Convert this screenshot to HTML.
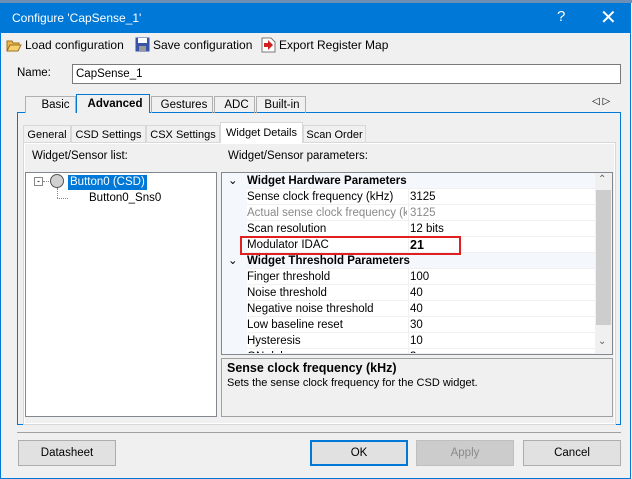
<!DOCTYPE html><html><head><style>
*{box-sizing:border-box;margin:0;padding:0}
body{width:632px;height:479px;background:#fff;font-family:"Liberation Sans",sans-serif;font-size:11.5px;color:#000;position:relative;overflow:hidden}
.a{position:absolute;white-space:nowrap}
.t{position:absolute;white-space:nowrap;text-align:center;overflow:hidden}
.btn{position:absolute;border:1px solid #adadad;background:#e1e1e1;text-align:center;line-height:24px;height:26px}
.row{position:absolute;left:222px;width:373px;height:16px;line-height:17px;white-space:nowrap}
.row .n{position:absolute;left:25px;width:160px;overflow:hidden}
.row .v{position:absolute;left:188px}
.row::after{content:"";position:absolute;left:25px;right:0;bottom:0;border-bottom:1px solid #f0f0f0}
.row .c{position:absolute;left:186px;top:0;bottom:0;border-left:1px solid #f0f0f0}
</style></head><body>
<div class="a" style="left:0;top:0;width:632px;height:3px;background:#6d8fb5"></div>
<div class="a" style="left:0;top:3px;width:631px;height:476px;background:#f0f0f0;border:1px solid #0078d7;border-top:none"></div>
<div class="a" style="left:0;top:3px;width:631px;height:30px;background:#0078d7;color:#fff;font-size:12px;line-height:30px;padding-left:12px">Configure 'CapSense_1'</div>
<div class="a" style="left:557px;top:8px;color:#fff;font-size:15px">?</div>
<div class="a" style="left:600px;top:5px;color:#fff;font-size:20px;font-weight:300">✕</div>
<svg class="a" style="left:6px;top:37px" width="16" height="16"><path d="M1 4h5l1 2h6v2H4L1 14z" fill="#e8b84a" stroke="#a07020"/><path d="M4 8h11l-3 6H1z" fill="#f5d070" stroke="#a07020"/></svg>
<div class="a" style="left:25px;top:38px;font-size:12px">Load configuration</div>
<svg class="a" style="left:135px;top:37px" width="15" height="15"><rect x="0.5" y="0.5" width="14" height="14" fill="#3a54a8"/><rect x="3" y="1" width="9" height="5" fill="#fff"/><rect x="4" y="9" width="7" height="5" fill="#999"/></svg>
<div class="a" style="left:153px;top:38px;font-size:12px">Save configuration</div>
<svg class="a" style="left:261px;top:37px" width="15" height="16"><path d="M1 1h9l4 4v10H1z" fill="#fff" stroke="#777"/><path d="M3 6h4V3l5 5-5 5v-3H3z" fill="#d02020"/></svg>
<div class="a" style="left:279px;top:38px;font-size:12px">Export Register Map</div>
<div class="a" style="left:17px;top:67px">Name:</div>
<div class="a" style="left:72px;top:64px;width:549px;height:20px;background:#fff;border:1px solid #7a7a7a;padding:3px 3px">CapSense_1</div>
<!-- outer tabs -->
<div class="a" style="left:17px;top:112px;width:604px;height:1px;background:#0078d7"></div>
<div class="t" style="left:25px;top:96px;width:51px;height:17px;border:1px solid #b0b0b0;border-bottom:none;background:#f0f0f0;padding:2px 0 0 10px">Basic</div>
<div class="t" style="left:76px;top:94px;width:74px;height:19px;border:1px solid #0078d7;border-bottom:none;background:#f0f0f0;padding:3px 0 0 4px;font-weight:bold">Advanced</div>
<div class="t" style="left:151px;top:96px;width:62px;height:17px;border:1px solid #b0b0b0;border-bottom:none;padding:2px 0 0 4px">Gestures</div>
<div class="t" style="left:214px;top:96px;width:41px;height:17px;border:1px solid #b0b0b0;border-bottom:none;padding:2px 0 0 4px">ADC</div>
<div class="t" style="left:256px;top:96px;width:50px;height:17px;border:1px solid #b0b0b0;border-bottom:none;padding:2px 0 0 2px">Built-in</div>
<div class="a" style="left:592px;top:96px;font-size:10px">◁ ▷</div>
<!-- inner panel -->
<div class="a" style="left:17px;top:113px;width:604px;height:312px;border:1px solid #0078d7;border-top:none"></div>
<div class="a" style="left:23px;top:142px;width:593px;height:283px;border:1px solid #d8d8d8;background:#f0f0f0"></div>
<div class="t" style="left:23px;top:125px;width:48px;height:18px;border:1px solid #d8d8d8;padding-top:3px;font-size:11px">General</div>
<div class="t" style="left:71px;top:125px;width:75px;height:18px;border:1px solid #d8d8d8;padding-top:3px;font-size:11px">CSD Settings</div>
<div class="t" style="left:146px;top:125px;width:74px;height:18px;border:1px solid #d8d8d8;padding-top:3px;font-size:11px">CSX Settings</div>
<div class="t" style="left:220px;top:122px;width:83px;height:21px;border:1px solid #d8d8d8;border-bottom:none;background:#fff;padding-top:4px;font-size:11px">Widget Details</div>
<div class="t" style="left:303px;top:125px;width:63px;height:18px;border:1px solid #d8d8d8;padding-top:3px;font-size:11px">Scan Order</div>
<div class="a" style="left:24px;top:143px;width:591px;height:281px;background:#f0f0f0;border:1px solid #fff"></div>
<div class="a" style="left:32px;top:150px">Widget/Sensor list:</div>
<div class="a" style="left:228px;top:150px">Widget/Sensor parameters:</div>
<!-- tree -->
<div class="a" style="left:25px;top:172px;width:192px;height:245px;background:#fff;border:1px solid #828790"></div>
<div class="a" style="left:34px;top:177px;width:9px;height:9px;border:1px solid #888;font-size:9px;line-height:6px;text-align:center">-</div>
<div class="a" style="left:43px;top:181px;width:8px;border-top:1px dotted #888"></div>
<div class="a" style="left:50px;top:174px;width:14px;height:14px;border-radius:50%;background:#d0d0d0;border:1px solid #555"></div>
<div class="a" style="left:57px;top:188px;height:10px;border-left:1px dotted #888"></div>
<div class="a" style="left:57px;top:198px;width:11px;border-top:1px dotted #888"></div>
<div class="a" style="left:68px;top:175px;background:#0078d7;color:#fff;padding:0 2px;line-height:15px">Button0 (CSD)</div>
<div class="a" style="left:89px;top:192px">Button0_Sns0</div>
<!-- grid -->
<div class="a" style="left:221px;top:172px;width:392px;height:183px;background:#fff;border:1px solid #828790"></div>
<div class="a" style="left:222px;top:173px;width:373px;height:181px;background:#fff"></div>
<div class="a" style="left:222px;top:173px;width:25px;height:181px;background:#f4f7fc"></div>
<div class="row" style="top:173px;background:#f4f7fc;font-weight:bold"><span class="a" style="left:6px;font-weight:normal">⌄</span><span class="n" style="width:300px">Widget  Hardware Parameters</span></div>
<div class="row" style="top:189px"><span class="c"></span><span class="n">Sense clock frequency (kHz)</span><span class="v">3125</span></div>
<div class="row" style="top:205px;color:#8a8a8a"><span class="c"></span><span class="n">Actual sense clock frequency (kH</span><span class="v">3125</span></div>
<div class="row" style="top:221px"><span class="c"></span><span class="n">Scan resolution</span><span class="v">12 bits</span></div>
<div class="row" style="top:237px"><span class="c"></span><span class="n">Modulator IDAC</span><span class="v" style="font-weight:bold;font-size:12.5px">21</span></div>
<div class="row" style="top:253px;background:#f4f7fc;font-weight:bold"><span class="a" style="left:6px;font-weight:normal">⌄</span><span class="n" style="width:300px">Widget  Threshold Parameters</span></div>
<div class="row" style="top:269px"><span class="c"></span><span class="n">Finger threshold</span><span class="v">100</span></div>
<div class="row" style="top:285px"><span class="c"></span><span class="n">Noise threshold</span><span class="v">40</span></div>
<div class="row" style="top:301px"><span class="c"></span><span class="n">Negative noise threshold</span><span class="v">40</span></div>
<div class="row" style="top:317px"><span class="c"></span><span class="n">Low baseline reset</span><span class="v">30</span></div>
<div class="row" style="top:333px"><span class="c"></span><span class="n">Hysteresis</span><span class="v">10</span></div>
<div class="row" style="top:349px;height:5px;overflow:hidden"><span class="c"></span><span class="n">ON debounce</span><span class="v">3</span></div>
<div class="a" style="left:240px;top:236px;width:221px;height:19px;border:2px solid #e02020"></div>
<div class="a" style="left:595px;top:173px;width:17px;height:181px;background:#f0f0f0"></div>
<div class="a" style="left:596px;top:190px;width:15px;height:135px;background:#cdcdcd"></div>
<div class="a" style="left:598px;top:174px;font-size:10px;color:#606060">⌃</div>
<div class="a" style="left:598px;top:336px;font-size:10px;color:#606060">⌄</div>
<!-- desc -->
<div class="a" style="left:221px;top:358px;width:392px;height:59px;border:1px solid #a0a0a0;background:#f0f0f0"></div>
<div class="a" style="left:227px;top:361px;font-weight:bold;font-size:12.5px">Sense clock frequency (kHz)</div>
<div class="a" style="left:227px;top:377px;font-size:11px">Sets the sense clock frequency for the CSD widget.</div>
<!-- bottom -->
<div class="a" style="left:17px;top:432px;width:604px;height:1px;background:#a0a0a0"></div>
<div class="btn" style="left:18px;top:440px;width:98px">Datasheet</div>
<div class="btn" style="left:310px;top:440px;width:98px;border:2px solid #0078d7;line-height:22px">OK</div>
<div class="btn" style="left:416px;top:440px;width:98px;background:#cccccc;border-color:#bfbfbf;color:#8a8a8a">Apply</div>
<div class="btn" style="left:523px;top:440px;width:98px">Cancel</div>
</body></html>
